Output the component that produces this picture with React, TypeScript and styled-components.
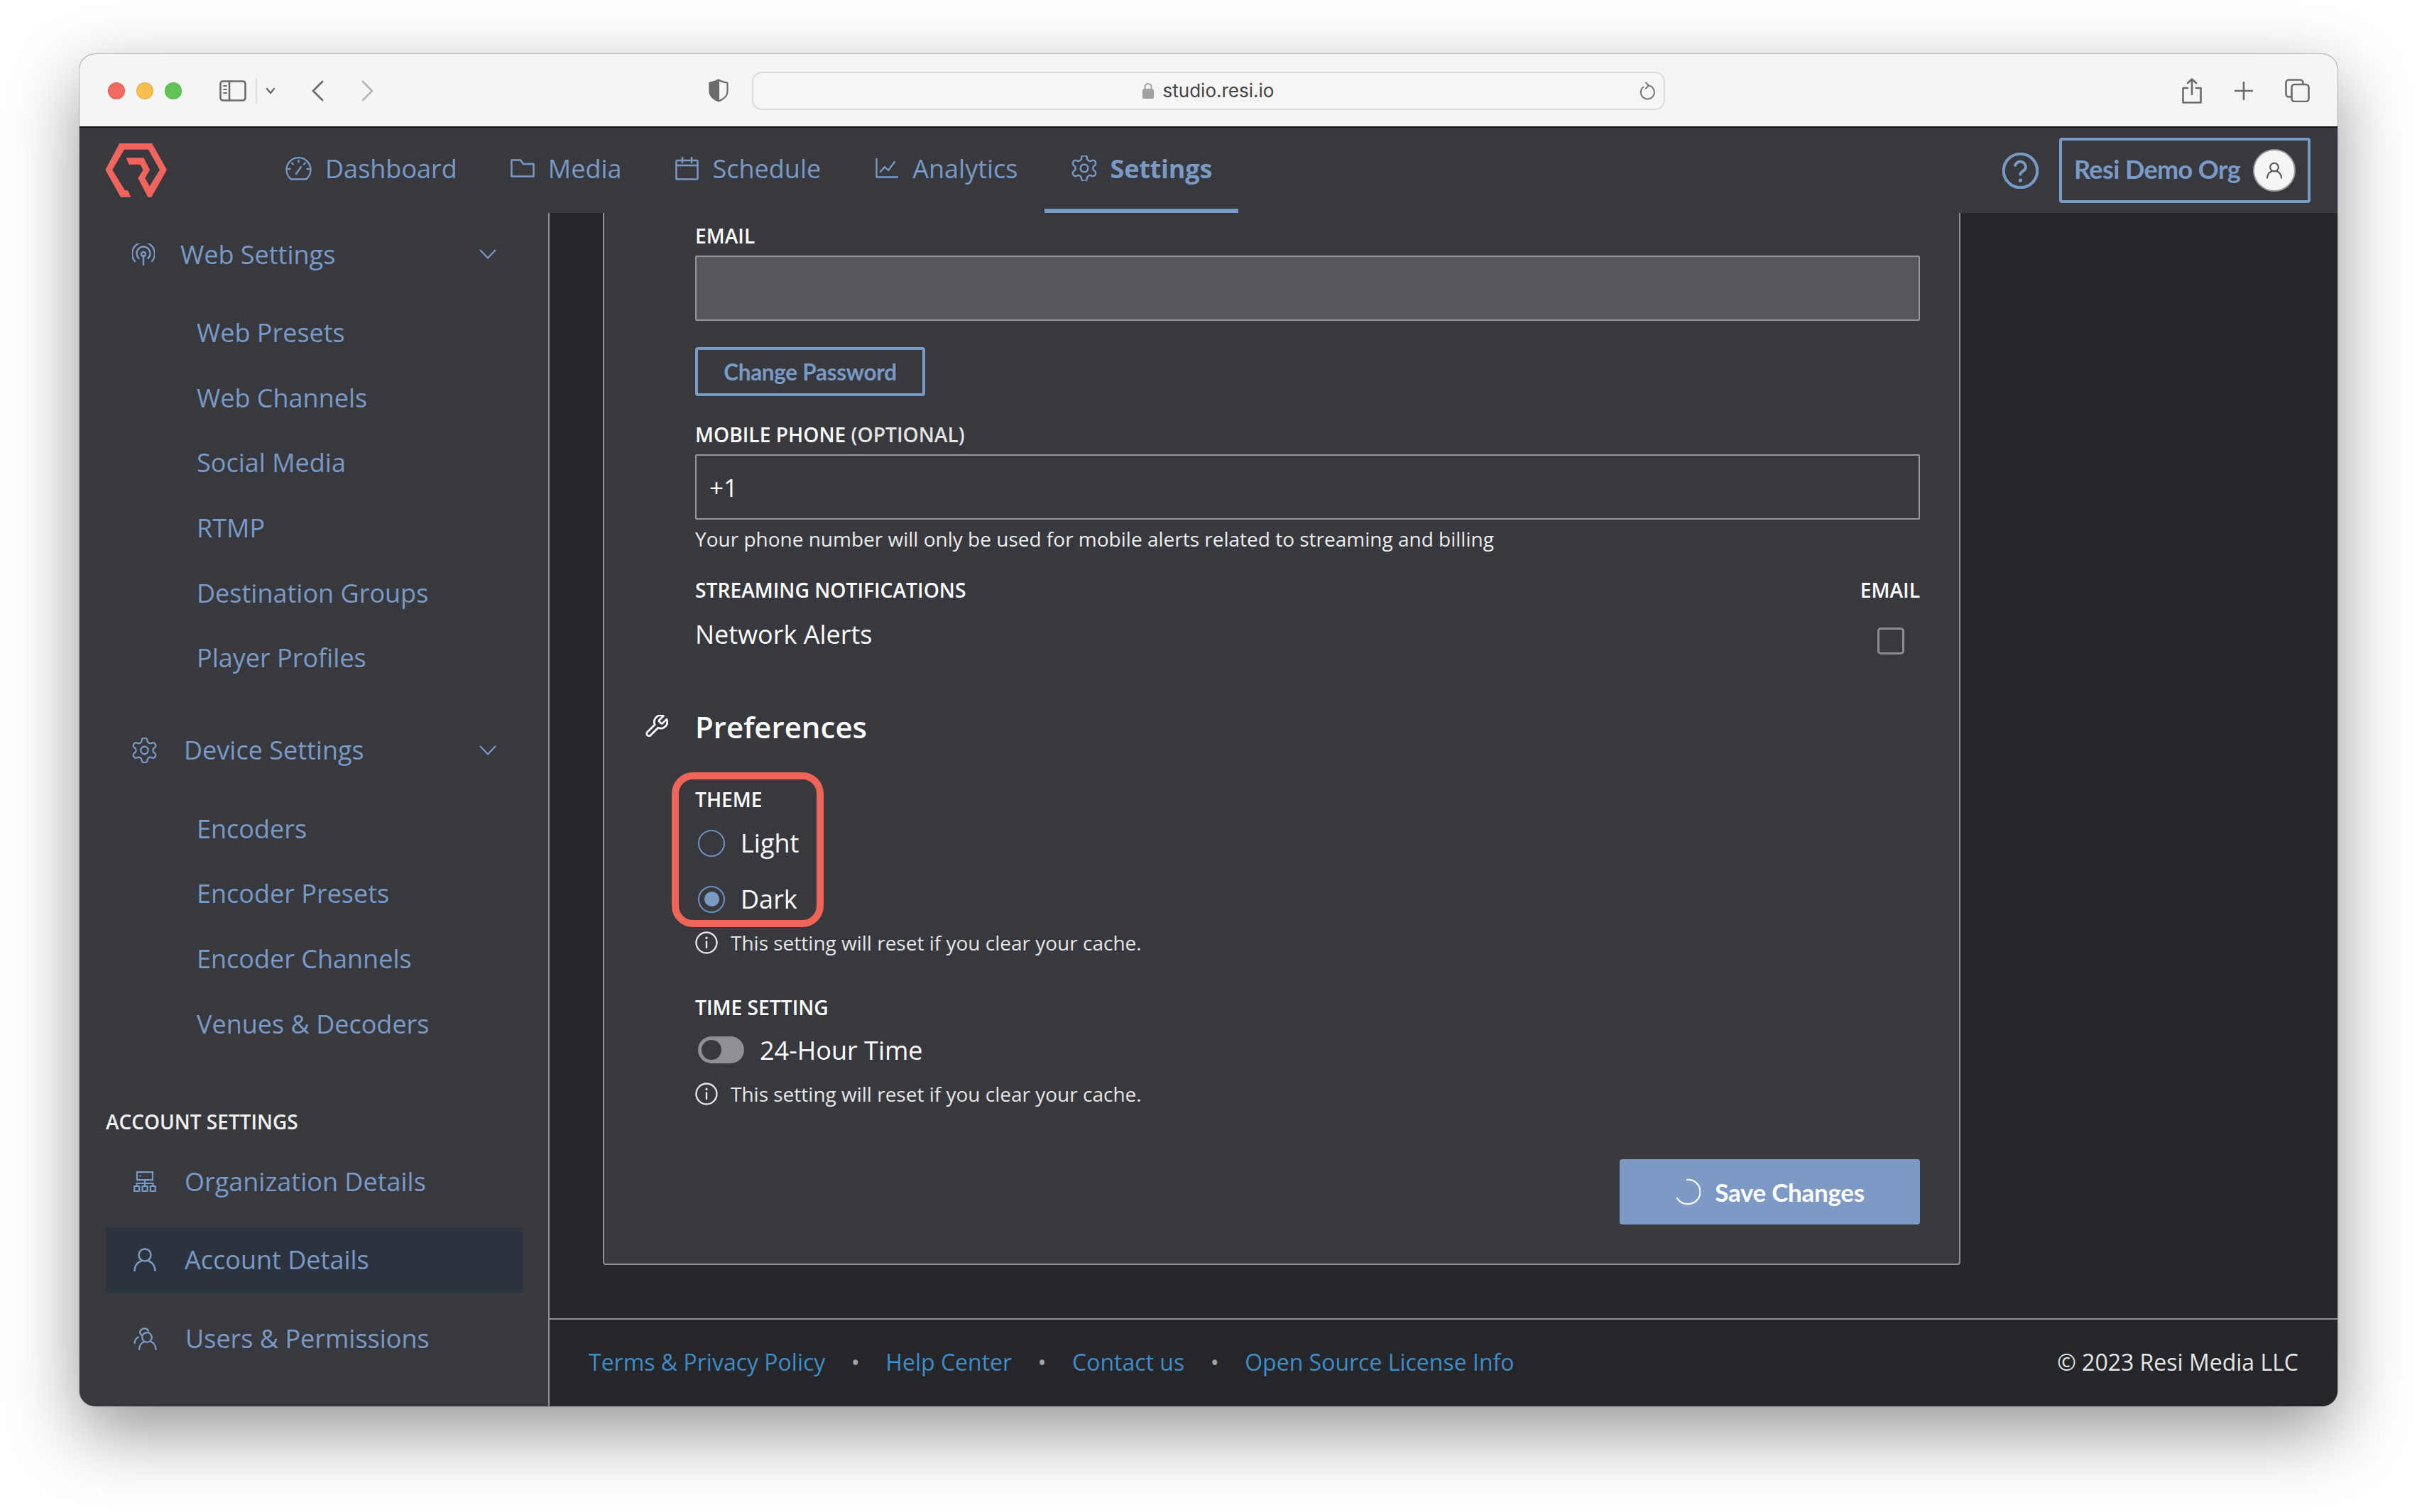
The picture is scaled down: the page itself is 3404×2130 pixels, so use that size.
import React from "react";
import styled, { createGlobalStyle } from "styled-components";

const Global = createGlobalStyle`
  html, body { margin: 0; padding: 0; background: #fff; }
  * { box-sizing: border-box; }
  #root { width: 3404px; height: 2130px; overflow: hidden; }
`;

const BLUE = "#7a9ac6";
const FONT = `"Open Sans", "Noto Sans", sans-serif`;

const Stage = styled.div`
  width: 3404px;
  height: 2130px;
  padding: 76px 112px 149px;
  background: #fff;
  font-family: ${FONT};
`;
const Win = styled.div`
  height: 100%;
  display: flex;
  flex-direction: column;
  border-radius: 22px;
  overflow: hidden;
  background: #25262a;
  box-shadow: 0 0 0 1px rgba(0, 0, 0, 0.18), 0 36px 100px rgba(0, 0, 0, 0.42);
`;

/* Safari chrome */
const Chrome = styled.div`
  flex: 0 0 104px;
  display: flex;
  align-items: center;
  padding: 1px 39px 0 40px;
  background: #f5f5f5;
  border-bottom: 2.5px solid #141416;
  color: #6b6b6b;
`;
const Light = styled.span<{ $c: string }>`
  width: 24px;
  height: 24px;
  border-radius: 50%;
  margin-right: 16px;
  background: ${(p) => p.$c};
  box-shadow: inset 0 0 0 1px rgba(0, 0, 0, 0.1);
`;
const Glyph = styled.svg<{ $w: number; $h: number; $ml?: number; $sw?: number; $c?: string }>`
  flex: none;
  display: block;
  width: ${(p) => p.$w}px;
  height: ${(p) => p.$h}px;
  margin-left: ${(p) => p.$ml ?? 0}px;
  fill: none;
  stroke: ${(p) => p.$c ?? "currentColor"};
  stroke-width: ${(p) => p.$sw ?? 2.6};
  stroke-linecap: round;
  stroke-linejoin: round;
`;
const Divider = styled.span`
  width: 1.5px;
  height: 36px;
  margin-left: 13px;
  background: #dedede;
`;
const UrlBar = styled.div`
  position: relative;
  flex: 0 0 1286px;
  height: 54px;
  margin-left: 33px;
  display: flex;
  align-items: center;
  justify-content: center;
  gap: 13px;
  border: 2.5px solid #dcdcdc;
  border-radius: 14px;
  background: #f6f6f6;
`;
const UrlText = styled.span`
  font-family: "Inter", "Liberation Sans", sans-serif;
  font-size: 26px;
  color: #444;
  line-height: 1;
`;
const Reload = styled.span`
  position: absolute;
  right: 12px;
  top: 12px;
  display: flex;
  color: #777;
`;
const Spring = styled.span`
  flex: 1;
`;

/* App nav */
const TopNav = styled.header`
  flex: 0 0 120px;
  display: flex;
  align-items: stretch;
  padding: 0 38px 0 28px;
  background: #38393e;
`;
const LogoSlot = styled.div`
  display: flex;
  align-items: center;
  margin-right: 114px;
`;
const LogoMark = styled.svg`
  display: block;
  width: 110px;
  height: 100px;
  fill: #f1645d;
`;
const NavItem = styled.div<{ $active?: boolean; $gap?: number; $pr?: number }>`
  display: flex;
  align-items: center;
  gap: ${(p) => p.$gap ?? 20}px;
  padding: 0 ${(p) => p.$pr ?? 37}px 0 38px;
  color: ${BLUE};
  font-size: 36px;
  font-weight: ${(p) => (p.$active ? 700 : 400)};
  letter-spacing: ${(p) => (p.$active ? "-0.2px" : "0")};
  border-bottom: 6px solid ${(p) => (p.$active ? BLUE : "transparent")};
`;
const NavRight = styled.div`
  margin-left: auto;
  display: flex;
  align-items: center;
  gap: 29px;
  color: ${BLUE};
`;
const OrgButton = styled.div`
  width: 354px;
  height: 92px;
  display: flex;
  align-items: center;
  justify-content: space-between;
  padding: 0 17px 0 17px;
  border: 4px solid ${BLUE};
  border-radius: 4px;
  font-family: "Lato", sans-serif;
  font-weight: 700;
  font-size: 36px;
  letter-spacing: -0.6px;
`;
const OrgName = styled.span`
  position: relative;
  top: -2px;
`;
const Avatar = styled.span`
  width: 60px;
  height: 60px;
  border-radius: 50%;
  display: flex;
  align-items: center;
  justify-content: center;
  background: #f5f5f5;
  border: 2px solid #9a9a9a;
  color: #555;
`;

/* Body */
const Body = styled.div`
  flex: 1;
  min-height: 0;
  display: flex;
`;
const Sidebar = styled.aside`
  flex: 0 0 662px;
  padding: 12px 36px 0 37px;
  background: #38393e;
  border-right: 2px solid #8f9095;
  display: flex;
  flex-direction: column;
`;
const GroupRow = styled.div<{ $gap: number; $mt?: number }>`
  height: 92px;
  flex: none;
  margin-top: ${(p) => p.$mt ?? 0}px;
  display: flex;
  align-items: center;
  gap: ${(p) => p.$gap}px;
  padding: 0 37px;
  color: ${BLUE};
  font-size: 36px;
`;
const Chevron = styled.span`
  margin-left: auto;
  display: flex;
`;
const SubList = styled.div`
  margin-top: 19px;
  display: flex;
  flex-direction: column;
`;
const SubItem = styled.div`
  height: 91.6px;
  padding-left: 128px;
  display: flex;
  align-items: center;
  color: ${BLUE};
  font-size: 36px;
`;
const SectionTitle = styled.div`
  margin-top: 71.6px;
  height: 40px;
  line-height: 40px;
  font-size: 28px;
  font-weight: 600;
  color: #f2f2f2;
`;
const AccountRow = styled.div<{ $active?: boolean }>`
  height: 92px;
  flex: none;
  margin-top: 18.5px;
  display: flex;
  align-items: center;
  gap: 40px;
  padding: 0 37px 0 39px;
  color: ${BLUE};
  font-size: 36px;
  background: ${(p) => (p.$active ? "#2b333f" : "transparent")};
`;

const Main = styled.main`
  flex: 1;
  min-width: 0;
  display: flex;
  flex-direction: column;
`;
const Content = styled.div`
  flex: 1;
  padding-left: 75px;
`;
const Card = styled.section`
  width: 1912px;
  padding: 12px 55px 55px 128px;
  background: #38393e;
  border: 2px solid #8f9095;
  border-top: 0;
  border-radius: 0 0 4px 4px;
  display: flex;
  flex-direction: column;
  color: #fff;
`;
const Label = styled.div<{ $mt?: number }>`
  height: 40px;
  line-height: 40px;
  margin-top: ${(p) => p.$mt ?? 0}px;
  font-size: 28.2px;
  font-weight: 600;
  color: #fff;
  white-space: nowrap;
`;
const Muted = styled.span`
  color: #e4e4e4;
`;
const Field = styled.div<{ $disabled?: boolean }>`
  height: 92px;
  margin-top: 8px;
  padding-left: 18px;
  display: flex;
  align-items: center;
  border: 2px solid #96979b;
  border-radius: 2px;
  background: ${(p) => (p.$disabled ? "#56575b" : "#38393e")};
  font-size: 35px;
  color: #fff;
`;
const GhostButton = styled.div`
  width: 324px;
  height: 69px;
  margin-top: 37px;
  display: flex;
  align-items: center;
  justify-content: center;
  border: 4px solid ${BLUE};
  border-radius: 4px;
  color: ${BLUE};
  font-family: "Lato", sans-serif;
  font-size: 31.5px;
  font-weight: 700;
  letter-spacing: -0.3px;
`;
const Helper = styled.div`
  height: 40px;
  line-height: 40px;
  margin-top: 7px;
  font-size: 28px;
  color: #ededed;
`;
const SplitRow = styled.div<{ $mt: number }>`
  margin-top: ${(p) => p.$mt}px;
  display: flex;
  justify-content: space-between;
  align-items: flex-start;
`;
const BodyText = styled.div`
  height: 40px;
  line-height: 40px;
  font-size: 36px;
  color: #fff;
`;
const Check = styled.span`
  width: 38px;
  height: 38px;
  margin: 10px 22px 0 0;
  border: 3px solid #8c8d93;
  border-radius: 5px;
`;
const SectionHead = styled.div`
  position: relative;
  margin-top: 73px;
  height: 56px;
  display: flex;
  align-items: center;
  font-size: 42px;
  font-weight: 600;
`;
const HeadIcon = styled.span`
  position: absolute;
  left: -71px;
  top: 12px;
  display: flex;
`;
const ThemeGroup = styled.div`
  position: relative;
  margin-top: 55px;
`;
const Annotation = styled.div`
  position: absolute;
  left: -33px;
  top: -18px;
  width: 214px;
  height: 218px;
  border: 10px solid #ee6457;
  border-radius: 30px;
  pointer-events: none;
`;
const RadioRow = styled.div<{ $mt?: number }>`
  height: 79px;
  margin-top: ${(p) => p.$mt ?? 0}px;
  padding-left: 4px;
  display: flex;
  align-items: center;
  gap: 22px;
  font-size: 36px;
`;
const Radio = styled.span<{ $on?: boolean }>`
  width: 38px;
  height: 38px;
  border-radius: 50%;
  border: 2.5px solid #6f90bf;
  display: flex;
  align-items: center;
  justify-content: center;
  &::after {
    content: "";
    display: ${(p) => (p.$on ? "block" : "none")};
    width: 21px;
    height: 21px;
    border-radius: 50%;
    background: ${BLUE};
  }
`;
const InfoRow = styled.div<{ $mt: number }>`
  height: 40px;
  margin-top: ${(p) => p.$mt}px;
  display: flex;
  align-items: center;
  gap: 18px;
  font-size: 28px;
  color: #e6e6e6;
`;
const ToggleRow = styled.div`
  height: 44px;
  margin-top: 18px;
  padding-left: 4px;
  display: flex;
  align-items: center;
  gap: 22px;
  font-size: 36px;
`;
const Toggle = styled.span`
  width: 65px;
  height: 38px;
  padding: 5px;
  border-radius: 19px;
  background: #8f9095;
  display: flex;
  &::before {
    content: "";
    width: 28px;
    height: 28px;
    border-radius: 50%;
    background: #38393e;
  }
`;
const SaveButton = styled.div`
  align-self: flex-end;
  width: 423px;
  height: 92px;
  margin-top: 72px;
  display: flex;
  align-items: center;
  justify-content: center;
  gap: 20px;
  border-radius: 4px;
  background: #7d9ac4;
  color: #fff;
  font-family: "Lato", sans-serif;
  font-size: 35px;
  font-weight: 700;
  letter-spacing: -0.3px;
`;
const Footer = styled.footer`
  flex: 0 0 124px;
  padding: 0 55px 3px;
  display: flex;
  align-items: center;
  border-top: 2.5px solid #8f9095;
  background: #25262a;
  font-size: 32px;
`;
const FootLink = styled.span`
  color: #3f8dc8;
  white-space: nowrap;
`;
const FootDot = styled.span`
  width: 85px;
  text-align: center;
  color: #a4a4a4;
  font-size: 32px;
`;
const Copy = styled.span`
  margin-left: auto;
  color: #e6e6e6;
`;

const Gear = ({ w, h, ml, sw }: { w: number; h: number; ml?: number; sw?: number }) => (
  <Glyph $w={w} $h={h} $ml={ml} $sw={sw ?? 1.3} viewBox="2 2 20 20">
    <path d="M12.22 2h-.44a2 2 0 0 0-2 2v.18a2 2 0 0 1-1 1.73l-.43.25a2 2 0 0 1-2 0l-.15-.08a2 2 0 0 0-2.73.73l-.22.38a2 2 0 0 0 .73 2.73l.15.1a2 2 0 0 1 1 1.72v.51a2 2 0 0 1-1 1.74l-.15.09a2 2 0 0 0-.73 2.73l.22.38a2 2 0 0 0 2.73.73l.15-.08a2 2 0 0 1 2 0l.43.25a2 2 0 0 1 1 1.73V20a2 2 0 0 0 2 2h.44a2 2 0 0 0 2-2v-.18a2 2 0 0 1 1-1.73l.43-.25a2 2 0 0 1 2 0l.15.08a2 2 0 0 0 2.73-.73l.22-.39a2 2 0 0 0-.73-2.73l-.15-.08a2 2 0 0 1-1-1.74v-.5a2 2 0 0 1 1-1.74l.15-.09a2 2 0 0 0 .73-2.73l-.22-.38a2 2 0 0 0-2.73-.73l-.15.08a2 2 0 0 1-2 0l-.43-.25a2 2 0 0 1-1-1.73V4a2 2 0 0 0-2-2z" />
    <circle cx="12" cy="12" r="3" />
  </Glyph>
);
const Down = () => (
  <Chevron>
    <Glyph $w={24} $h={14} $sw={2.2} viewBox="0 0 24 14">
      <path d="M1.5 1.5 12 12.5 22.5 1.5" />
    </Glyph>
  </Chevron>
);
const InfoIcon = () => (
  <Glyph $w={32} $h={32} $sw={2.4} viewBox="0 0 32 32">
    <circle cx="16" cy="16" r="14.5" />
    <path d="M16 14.5V23" />
    <path d="M16 9v.4" strokeWidth="3.2" />
  </Glyph>
);
const UserIcon = ({ w = 32, h = 33, sw = 2.5 }: { w?: number; h?: number; sw?: number }) => (
  <Glyph $w={w} $h={h} $sw={sw} viewBox="0 0 32 33">
    <circle cx="16" cy="10" r="8.5" />
    <path d="M1.5 32C2 24 6 20 11 18.2M30.5 32C30 24 26 20 21 18.2" />
  </Glyph>
);

const subWeb = ["Web Presets", "Web Channels", "Social Media", "RTMP", "Destination Groups", "Player Profiles"];
const subDev = ["Encoders", "Encoder Presets", "Encoder Channels", "Venues & Decoders"];

export default function App() {
  return (
    <Stage>
      <Global />
      <Win>
        <Chrome>
          <Light $c="#f06b5f" />
          <Light $c="#f6be4f" />
          <Light $c="#5fc454" />
          <Glyph $w={38} $h={30} $ml={37} viewBox="0 0 38 30">
            <rect x="1.5" y="1.5" width="35" height="27" rx="3.5" />
            <path d="M14 1.5v27" />
            <path d="M6 8h4M6 13h4M6 18h4" strokeWidth="2" />
          </Glyph>
          <Divider />
          <Glyph $w={14} $h={10} $ml={12} viewBox="0 0 14 10" $sw={2.4}>
            <path d="M2 2l5 6 5-6" />
          </Glyph>
          <Glyph $w={18} $h={30} $ml={50} viewBox="0 0 18 30" $sw={2.8}>
            <path d="M16 2 3 15l13 13" />
          </Glyph>
          <Glyph $w={18} $h={30} $ml={53} viewBox="0 0 18 30" $sw={2.8} $c="#b5b5b5">
            <path d="M2 2l13 13L2 28" />
          </Glyph>
          <Glyph $w={28} $h={33} $ml={471} viewBox="0 0 28 33" $sw={2.2}>
            <path d="M14 1.5C10 4 6 5 1.5 5.5V18c0 6 5 10.500 12.500 13.500 7.500-3 12.500-7.500 12.500-13.500V5.500C22 5 18 4 14 1.500z" />
            <path d="M14 2C10 4.500 6 5.500 2 6v12c0 6 5 10 12 13z" fill="currentColor" />
          </Glyph>
          <UrlBar>
            <Glyph $w={16} $h={23} $sw={2} $c="#a0a0a0" viewBox="0 0 16 23">
              <path d="M3.500 10V6.500a4.500 4.500 0 0 1 9 0V10" />
              <rect x="1" y="10" width="14" height="12.500" rx="2" fill="#a0a0a0" />
            </Glyph>
            <UrlText>studio.resi.io</UrlText>
            <Reload>
              <Glyph $w={24} $h={26} $sw={2} viewBox="0 0 24 26">
                <path d="M14 5.500a9.500 9.500 0 1 1-6.500 2" />
                <path d="M11 1.500l4 4-4 4" />
              </Glyph>
            </Reload>
          </UrlBar>
          <Spring />
          <Glyph $w={28} $h={36} viewBox="0 0 28 36">
            <path d="M8 14H1.500v20.500h25V14H20" />
            <path d="M14 23V1.500M8 7l6-5.500L20 7" />
          </Glyph>
          <Glyph $w={26} $h={26} $ml={46} viewBox="0 0 26 26">
            <path d="M13 0v26M0 13h26" />
          </Glyph>
          <Glyph $w={35} $h={33} $ml={45} viewBox="0 0 35 33">
            <rect x="1.500" y="1.500" width="24" height="24" rx="4" />
            <rect x="9.500" y="8" width="24" height="24" rx="4" fill="#f5f5f5" />
          </Glyph>
        </Chrome>

        <TopNav>
          <LogoSlot>
            <LogoMark viewBox="0 0 330 300">
              <path d="M85 35H222L285 148 220 263H205L163 183 185 148 172 125H125L113 97H187L213 148 193 183 212 217 255 148 207 62H105L55 148 108 235H120L133 263H90L25 148Z" />
            </LogoMark>
          </LogoSlot>
          <NavItem $gap={19}>
            <Glyph $w={37} $h={33} $sw={2.3} viewBox="0 0 37 33">
              <path d="M8 31.500A17 17 0 1 1 29 31.500z" />
              <path d="M15 24l7-10M18.500 5v2.500M9 8.500l2 2M28 8.500l-2 2M4 17h2.500M33 17h-2.500" />
            </Glyph>
            Dashboard
          </NavItem>
          <NavItem $gap={19}>
            <Glyph $w={34} $h={26} $sw={2.5} viewBox="0 0 34 26">
              <path d="M1.500 24.500v-23H14l4 5.500h14.500v17.500z" />
            </Glyph>
            Media
          </NavItem>
          <NavItem $pr={39}>
            <Glyph $w={33} $h={33} $sw={2.5} viewBox="0 0 33 33">
              <rect x="1.500" y="5" width="30" height="26.500" rx="1" />
              <path d="M1.500 12h30M10 1v7M23 1v7" />
            </Glyph>
            Schedule
          </NavItem>
          <NavItem>
            <Glyph $w={32} $h={28} $sw={2.3} viewBox="0 0 32 28">
              <path d="M1.500 0v26.500H32" />
              <path d="M7 19l6-7 5 5 9-12" />
            </Glyph>
            Analytics
          </NavItem>
          <NavItem $active $gap={19}>
            <Gear w={36} h={36} />
            Settings
          </NavItem>
          <NavRight>
            <Glyph $w={51} $h={51} $sw={1.6} viewBox="2 2 20 20">
              <circle cx="12" cy="12" r="9.300" />
              <path d="M9.090 9a3 3 0 0 1 5.830 1c0 2-3 2.500-3 4" />
              <path d="M12 17.300h.01" strokeWidth="2" />
            </Glyph>
            <OrgButton>
              <OrgName>Resi Demo Org</OrgName>
              <Avatar>
                <UserIcon w={22} h={24} sw={3} />
              </Avatar>
            </OrgButton>
          </NavRight>
        </TopNav>

        <Body>
          <Sidebar>
            <GroupRow $gap={36}>
              <Glyph $w={32} $h={31} $sw={2.4} viewBox="0 0 32 31">
                <circle cx="16" cy="15" r="3" />
                <path d="M16 17v13M9.500 21A9.500 9.500 0 1 1 22.500 21M4 25A16 16 0 1 1 28 25" />
              </Glyph>
              Web Settings
              <Down />
            </GroupRow>
            <SubList>
              {subWeb.map((s) => (
                <SubItem key={s}>{s}</SubItem>
              ))}
            </SubList>
            <GroupRow $gap={38} $mt={38}>
              <Gear w={35} h={36} />
              Device Settings
              <Down />
            </GroupRow>
            <SubList>
              {subDev.map((s) => (
                <SubItem key={s}>{s}</SubItem>
              ))}
            </SubList>
            <SectionTitle>ACCOUNT SETTINGS</SectionTitle>
            <AccountRow>
              <Glyph $w={32} $h={29} $sw={2.2} viewBox="0 0 32 29">
                <rect x="5" y="1.200" width="22" height="11" />
                <path d="M16 12v5M4.500 21v-4h23v4M16 17v4M9.500 6.500h.5" />
                <rect x="1.200" y="21" width="7" height="7" />
                <rect x="12.500" y="21" width="7" height="7" />
                <rect x="23.800" y="21" width="7" height="7" />
              </Glyph>
              Organization Details
            </AccountRow>
            <AccountRow $active>
              <UserIcon />
              Account Details
            </AccountRow>
            <AccountRow>
              <Glyph $w={33} $h={33} $sw={2.3} viewBox="0 0 33 33">
                <circle cx="19" cy="15" r="6.800" />
                <path d="M8 32c.500-6 3-9.500 7-11M31.500 32c-.500-6-3-9.500-7-11" />
                <path d="M21 5.500A6.800 6.800 0 0 0 9 7c0 2 1 4 3 5M1.500 23c.500-4 2-7 5.500-8.500" />
              </Glyph>
              Users & Permissions
            </AccountRow>
          </Sidebar>

          <Main>
            <Content>
              <Card>
                <Label>EMAIL</Label>
                <Field $disabled />
                <GhostButton>Change Password</GhostButton>
                <Label $mt={34}>
                  MOBILE PHONE <Muted>(OPTIONAL)</Muted>
                </Label>
                <Field>+1</Field>
                <Helper>Your phone number will only be used for mobile alerts related to streaming and billing</Helper>
                <SplitRow $mt={32}>
                  <Label>STREAMING NOTIFICATIONS</Label>
                  <Label>EMAIL</Label>
                </SplitRow>
                <SplitRow $mt={23}>
                  <BodyText>Network Alerts</BodyText>
                  <Check />
                </SplitRow>
                <SectionHead>
                  <HeadIcon>
                    <Glyph $w={33} $h={32} $sw={1.800} viewBox="1.500 1.500 21 21">
                      <path d="M14.700 6.300a1 1 0 0 0 0 1.400l1.600 1.600a1 1 0 0 0 1.400 0l3.770-3.770a6 6 0 0 1-7.940 7.940l-6.910 6.910a2.120 2.120 0 0 1-3-3l6.910-6.910a6 6 0 0 1 7.940-7.940l-3.760 3.760z" />
                    </Glyph>
                  </HeadIcon>
                  Preferences
                </SectionHead>
                <ThemeGroup>
                  <Annotation />
                  <Label>THEME</Label>
                  <RadioRow $mt={2}>
                    <Radio />
                    Light
                  </RadioRow>
                  <RadioRow>
                    <Radio $on />
                    Dark
                  </RadioRow>
                </ThemeGroup>
                <InfoRow $mt={2}>
                  <InfoIcon />
                  This setting will reset if you clear your cache.
                </InfoRow>
                <Label $mt={51}>TIME SETTING</Label>
                <ToggleRow>
                  <Toggle />
                  24-Hour Time
                </ToggleRow>
                <InfoRow $mt={20}>
                  <InfoIcon />
                  This setting will reset if you clear your cache.
                </InfoRow>
                <SaveButton>
                  <Glyph $w={36} $h={38} $sw={2.2} viewBox="0 0 36 38">
                    <path d="M17 2a17 17 0 0 1 3 34A17 17 0 0 1 3 28" />
                  </Glyph>
                  Save Changes
                </SaveButton>
              </Card>
            </Content>
            <Footer>
              <FootLink>Terms & Privacy Policy</FootLink>
              <FootDot>•</FootDot>
              <FootLink>Help Center</FootLink>
              <FootDot>•</FootDot>
              <FootLink>Contact us</FootLink>
              <FootDot>•</FootDot>
              <FootLink>Open Source License Info</FootLink>
              <Copy>© 2023 Resi Media LLC</Copy>
            </Footer>
          </Main>
        </Body>
      </Win>
    </Stage>
  );
}
